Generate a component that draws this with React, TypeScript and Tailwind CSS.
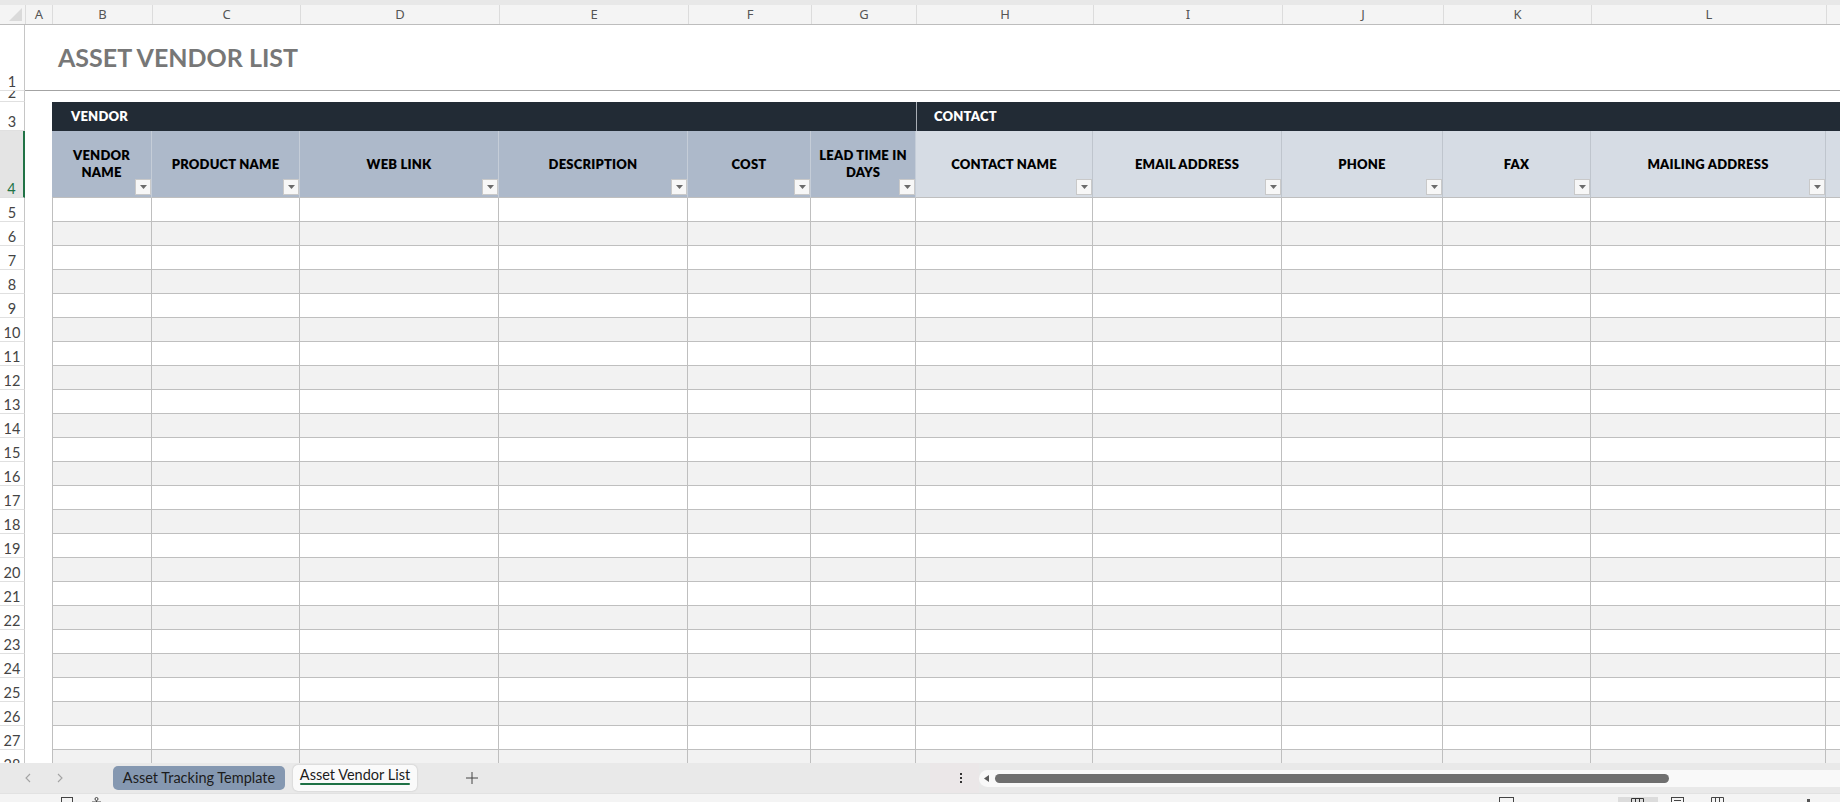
import React from "react";

type Col = { w: string; label: string[]; tone: "vendor" | "contact" };

const COLS: Col[] = [
    { w: "w-[100px]", label: ["VENDOR", "NAME"], tone: "vendor" },
    { w: "w-[148px]", label: ["PRODUCT NAME"], tone: "vendor" },
    { w: "w-[199px]", label: ["WEB LINK"], tone: "vendor" },
    { w: "w-[189px]", label: ["DESCRIPTION"], tone: "vendor" },
    { w: "w-[123px]", label: ["COST"], tone: "vendor" },
    { w: "w-[105px]", label: ["LEAD TIME IN", "DAYS"], tone: "vendor" },
    { w: "w-[177px]", label: ["CONTACT NAME"], tone: "contact" },
    { w: "w-[189px]", label: ["EMAIL ADDRESS"], tone: "contact" },
    { w: "w-[161px]", label: ["PHONE"], tone: "contact" },
    { w: "w-[148px]", label: ["FAX"], tone: "contact" },
    { w: "w-[235px]", label: ["MAILING ADDRESS"], tone: "contact" },
];

const LETTERS = [
    { l: "A", w: "w-[27px]" },
    { l: "B", w: "w-[100px]" },
    { l: "C", w: "w-[148px]" },
    { l: "D", w: "w-[199px]" },
    { l: "E", w: "w-[189px]" },
    { l: "F", w: "w-[123px]" },
    { l: "G", w: "w-[105px]" },
    { l: "H", w: "w-[177px]" },
    { l: "I", w: "w-[189px]" },
    { l: "J", w: "w-[161px]" },
    { l: "K", w: "w-[148px]" },
    { l: "L", w: "w-[235px]" },
];

const BODY_ROWS = Array.from({ length: 24 }, (_, i) => i + 5);

function RowHead({ n, active = false }: { n: number; active?: boolean }) {
    return (
        <div
            className={`flex w-[25px] shrink-0 items-end justify-center overflow-hidden border-b border-b-[#e0e0e0] pb-[1px] text-[14.5px] leading-[14px] ${
                active
                    ? "border-r-2 border-r-[#217346] bg-[#e4e4e4] text-[#217346]"
                    : "border-r border-r-[#c6c6c6] bg-white text-[#444]"
            }`}
        >
            {n}
        </div>
    );
}

function FilterButton() {
    return (
        <div className="absolute right-0 bottom-[2px] flex h-[16px] w-[16px] items-center justify-center border border-[#c9c9c9] bg-[#f7f7f7]">
            <svg width="7" height="4" viewBox="0 0 7 4">
                <polygon points="0,0 7,0 3.5,4" fill="#6b6b6b" />
            </svg>
        </div>
    );
}

function HeadCell({ col }: { col: Col }) {
    return (
        <div
            className={`relative flex ${col.w} shrink-0 items-center justify-center border-r border-b border-b-[#bfbfbf] text-center text-[13px] leading-[17px] font-extrabold tracking-[0.2px] text-black ${
                col.tone === "vendor" ? "border-r-[#c5cdd8] bg-[#adb9ca]" : "border-r-[#bfc5cd] bg-[#d6dce4]"
            }`}
        >
            <span>
                {col.label.map((line, i) => (
                    <span key={i} className="block">
                        {line}
                    </span>
                ))}
            </span>
            <FilterButton />
        </div>
    );
}

function ColumnHeader() {
    return (
        <div className="flex h-[20px] shrink-0 border-b border-[#bdbdbd] bg-[#f4f4f4] font-['Noto_Sans',sans-serif] text-[13px] text-[#555]">
            <div className="relative w-[25px] shrink-0">
                <svg className="absolute top-[3px] left-[9px]" width="13" height="13" viewBox="0 0 13 13">
                    <polygon points="13,0 13,13 0,13" fill="#dadada" />
                </svg>
            </div>
            {LETTERS.map((c) => (
                <div key={c.l} className={`flex ${c.w} shrink-0 items-center justify-center border-l border-[#dcdcdc]`}>
                    {c.l}
                </div>
            ))}
            <div className="flex-1 border-l border-[#dcdcdc]" />
        </div>
    );
}

function Sheet() {
    return (
        <div className="flex h-[738px] shrink-0 flex-col overflow-hidden">
            {/* Title row */}
            <div className="flex h-[66px] shrink-0">
                <RowHead n={1} />
                <div className="flex-1 border-b border-[#a3a3a3] pt-[20px] pl-[33px]">
                    <h1 className="text-[25px] leading-[25px] font-bold text-[#777777]">ASSET VENDOR LIST</h1>
                </div>
            </div>

            <div className="flex h-[11px] shrink-0">
                <RowHead n={2} />
                <div className="flex-1 bg-white" />
            </div>

            {/* Group band */}
            <div className="flex h-[29px] shrink-0">
                <RowHead n={3} />
                <div className="w-[27px] shrink-0" />
                <div className="flex flex-1 bg-[#222b35] text-[13px] leading-[17px] font-extrabold tracking-[0.2px] text-white">
                    <div className="flex w-[864px] shrink-0 items-center pl-[19px]">VENDOR</div>
                    <div className="flex flex-1 items-center border-l border-[#a9aeb5] pl-[17px]">CONTACT</div>
                </div>
            </div>

            {/* Column titles */}
            <div className="flex h-[67px] shrink-0">
                <RowHead n={4} active />
                <div className="w-[27px] shrink-0" />
                {COLS.map((c) => (
                    <HeadCell key={c.label.join(" ")} col={c} />
                ))}
                <div className="flex-1 border-b border-[#bfbfbf] bg-[#d6dce4]" />
            </div>

            {BODY_ROWS.map((n) => {
                const fill = n % 2 === 0 ? "bg-[#f2f2f2]" : "bg-white";
                return (
                    <div key={n} className="flex h-[24px] shrink-0">
                        <RowHead n={n} />
                        <div className="w-[27px] shrink-0" />
                        {COLS.map((c, i) => (
                            <div
                                key={i}
                                className={`${c.w} shrink-0 border-r border-b border-[#bfbfbf] ${i === 0 ? "border-l" : ""} ${fill}`}
                            />
                        ))}
                        <div className={`flex-1 border-b border-[#bfbfbf] ${fill}`} />
                    </div>
                );
            })}
        </div>
    );
}

function Chevron({ dir, className }: { dir: "left" | "right"; className?: string }) {
    return (
        <svg className={className} width="6" height="10" viewBox="0 0 6 10">
            <path
                d={dir === "left" ? "M5 1 L1 5 L5 9" : "M1 1 L5 5 L1 9"}
                fill="none"
                stroke="#a3a3a3"
                strokeWidth="1.1"
            />
        </svg>
    );
}

function TabBar() {
    return (
        <div className="flex h-[30px] shrink-0 items-center bg-[#e9e9e9] font-['Lato',sans-serif] text-[14.5px] text-[#1c1c1c]">
            <Chevron dir="left" className="ml-[25px]" />
            <Chevron dir="right" className="ml-[26px]" />
            <div className="ml-[50px] flex h-[24px] w-[172px] shrink-0 items-center justify-center rounded-[5px] bg-[#8598b1]">
                Asset Tracking Template
            </div>
            <div className="ml-[8px] flex h-[26px] w-[124px] shrink-0 flex-col items-center rounded-[5px] bg-[#fafafa] pt-[1px] shadow-[0_0_2px_rgba(0,0,0,0.2)]">
                <span className="leading-[17px]">Asset Vendor List</span>
                <span className="h-[2px] w-[110px] rounded bg-[#1e7145]" />
            </div>
            <svg className="ml-[49px]" width="12" height="12" viewBox="0 0 12 12">
                <path d="M6 0 V12 M0 6 H12" stroke="#444" strokeWidth="1" />
            </svg>
            <div className="ml-[452px] flex h-full w-[49px] shrink-0 items-center bg-[#ebe7e8] pl-[30px]">
                <div className="flex flex-col gap-[2px]">
                    <span className="h-[2px] w-[2px] bg-[#333]" />
                    <span className="h-[2px] w-[2px] bg-[#333]" />
                    <span className="h-[2px] w-[2px] bg-[#333]" />
                </div>
            </div>
            <div className="flex h-[17px] flex-1 items-center rounded-l-full bg-[#f9f9f9]">
                <svg className="ml-[5px]" width="5" height="7" viewBox="0 0 5 7">
                    <polygon points="5,0 5,7 0,3.5" fill="#5a5a5a" />
                </svg>
                <div className="ml-[6px] h-[9px] w-[674px] rounded-full bg-[#6f6f6f]" />
            </div>
        </div>
    );
}

function StatusBar() {
    return (
        <div className="flex h-[9px] shrink-0 items-start overflow-hidden border-t border-[#e2e2e2] bg-[#f4f4f4] pt-[3px]">
            <svg className="ml-[61px]" width="12" height="12" viewBox="0 0 12 12">
                <rect x="0.5" y="0.5" width="11" height="11" fill="none" stroke="#444" />
            </svg>
            <svg className="ml-[18px]" width="11" height="12" viewBox="0 0 11 12">
                <circle cx="5.5" cy="2" r="1.5" fill="none" stroke="#444" />
                <path d="M1 5 H10 M5.5 4 V12" stroke="#444" />
            </svg>
            <svg className="ml-[1397px]" width="15" height="12" viewBox="0 0 15 12">
                <rect x="0.5" y="0.5" width="14" height="11" fill="none" stroke="#444" />
            </svg>
            <div className="ml-[104px] flex h-[10px] w-[40px] shrink-0 items-start bg-[#dcdcdc] pt-[1px] pl-[13px]">
                <svg width="13" height="12" viewBox="0 0 13 12">
                    <path d="M0.5 12 V0.5 H12.5 V12 M4.5 0.5 V12 M8.5 0.5 V12" fill="none" stroke="#333" />
                </svg>
            </div>
            <svg className="ml-[13px]" width="13" height="12" viewBox="0 0 13 12">
                <rect x="0.5" y="0.5" width="12" height="11" fill="none" stroke="#444" />
                <path d="M3 3.5 H10" stroke="#444" />
            </svg>
            <svg className="ml-[27px]" width="13" height="12" viewBox="0 0 13 12">
                <path d="M0.5 12 V0.5 H12.5 V12 M4.5 0.5 V12 M8.5 0.5 V12" fill="none" stroke="#444" />
            </svg>
            <div className="mt-[2px] ml-[83px] h-[4px] w-[3px] bg-[#555]" />
        </div>
    );
}

export default function App() {
    return (
        <div className="flex h-[802px] w-[1840px] flex-col overflow-hidden bg-white font-['Lato',sans-serif]">
            <div className="h-[5px] shrink-0 bg-[#e8e8e8]" />
            <ColumnHeader />
            <Sheet />
            <TabBar />
            <StatusBar />
        </div>
    );
}
